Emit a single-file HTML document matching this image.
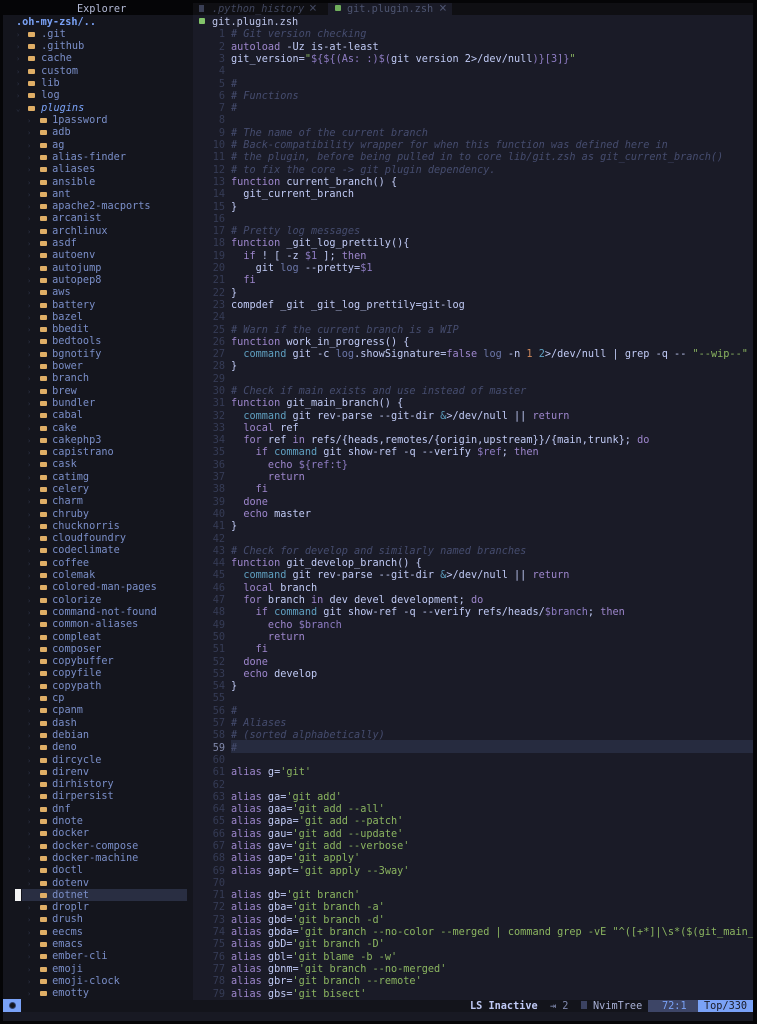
<!DOCTYPE html>
<html><head><meta charset="utf-8"><style>
html,body{margin:0;padding:0;background:#000;width:757px;height:1024px;overflow:hidden}
#r{position:relative;width:757px;height:1024px;overflow:hidden;background:#050507;font-family:"DejaVu Sans Mono","Liberation Mono",monospace;font-size:10.22px;filter:blur(.25px)}
.a{position:absolute}
pre{margin:0;font:inherit;line-height:12.3px}
.c{color:#454c6e;font-style:italic}.k{color:#9d86cc}.b{color:#5f9fc0}.s{color:#8bb560}.v{color:#8e7cc3}.o{color:#d08a5c}.d{color:#6b76a8}
.n{color:#353b55;text-align:right}
.f{display:inline-block;width:7px;height:5px;background:#dfae66;border-radius:1px;vertical-align:baseline;line-height:0}
.t{color:#2e3448;display:inline-block;width:12px;font-size:7px;vertical-align:baseline;line-height:0}
.u .f{position:relative;left:1px}
</style></head><body><div id="r">
<div class="a" style="left:3px;top:15px;width:190px;height:985px;background:#14151d"></div>
<div class="a" style="left:193px;top:3px;width:560px;height:12px;background:#0f0f13"></div>
<div class="a" style="left:193px;top:15px;width:560px;height:985px;background:#1a1b27"></div>
<div class="a" style="left:328px;top:3px;width:124px;height:12px;background:#1a1b27"></div>
<div class="a" style="left:231px;top:740px;width:522px;height:13px;background:#262b3f"></div>
<div class="a" style="left:22px;top:889px;width:165px;height:12px;background:#292e42"></div>
<div class="a" style="left:15px;top:889px;width:6px;height:12px;background:#f4f4f4"></div>
<div class="a" style="left:77px;top:4px;color:#b4bad6">Explorer</div>
<div class="a" style="left:199px;top:5px;width:5px;height:7px;background:#3a3f55"></div>
<div class="a" style="left:212px;top:4px;color:#41475f;font-style:italic">.python_history</div>
<div class="a" style="left:309px;top:2px;color:#41475f;font-size:13px;line-height:13px">×</div>
<div class="a" style="left:335px;top:5px;width:6px;height:6px;background:#6fae5c;border-radius:1px"></div>
<div class="a" style="left:347px;top:4px;color:#4d5470">git.plugin.zsh</div>
<div class="a" style="left:439px;top:2px;color:#4d5470;font-size:13px;line-height:13px">×</div>
<div class="a" style="left:199px;top:18px;width:6px;height:6px;background:#82c46a;border-radius:1px"></div>
<div class="a" style="left:212px;top:16.5px;color:#bdc5ea">git.plugin.zsh</div>
<div class="a" style="left:16px;top:16.5px;color:#7aa2f7;font-weight:bold">.oh-my-zsh/..</div>
<pre class="a" style="left:16px;top:28.8px;color:#7a8ec8"><span class="t">›</span><span class="f"></span> .git
<span class="t">›</span><span class="f"></span> .github
<span class="t">›</span><span class="f"></span> cache
<span class="t">›</span><span class="f"></span> custom
<span class="t">›</span><span class="f"></span> lib
<span class="t">›</span><span class="f"></span> log
<span class="t">⌄</span><span class="f"></span> <b style="font-style:italic;font-weight:500;color:#7aa2f7">plugins</b>
</pre>
<pre class="a u" style="left:27px;top:115.1px;color:#7a8ec8"><span class="t">›</span><span class="f"></span> 1password
<span class="t">›</span><span class="f"></span> adb
<span class="t">›</span><span class="f"></span> ag
<span class="t">›</span><span class="f"></span> alias-finder
<span class="t">›</span><span class="f"></span> aliases
<span class="t">›</span><span class="f"></span> ansible
<span class="t">›</span><span class="f"></span> ant
<span class="t">›</span><span class="f"></span> apache2-macports
<span class="t">›</span><span class="f"></span> arcanist
<span class="t">›</span><span class="f"></span> archlinux
<span class="t">›</span><span class="f"></span> asdf
<span class="t">›</span><span class="f"></span> autoenv
<span class="t">›</span><span class="f"></span> autojump
<span class="t">›</span><span class="f"></span> autopep8
<span class="t">›</span><span class="f"></span> aws
<span class="t">›</span><span class="f"></span> battery
<span class="t">›</span><span class="f"></span> bazel
<span class="t">›</span><span class="f"></span> bbedit
<span class="t">›</span><span class="f"></span> bedtools
<span class="t">›</span><span class="f"></span> bgnotify
<span class="t">›</span><span class="f"></span> bower
<span class="t">›</span><span class="f"></span> branch
<span class="t">›</span><span class="f"></span> brew
<span class="t">›</span><span class="f"></span> bundler
<span class="t">›</span><span class="f"></span> cabal
<span class="t">›</span><span class="f"></span> cake
<span class="t">›</span><span class="f"></span> cakephp3
<span class="t">›</span><span class="f"></span> capistrano
<span class="t">›</span><span class="f"></span> cask
<span class="t">›</span><span class="f"></span> catimg
<span class="t">›</span><span class="f"></span> celery
<span class="t">›</span><span class="f"></span> charm
<span class="t">›</span><span class="f"></span> chruby
<span class="t">›</span><span class="f"></span> chucknorris
<span class="t">›</span><span class="f"></span> cloudfoundry
<span class="t">›</span><span class="f"></span> codeclimate
<span class="t">›</span><span class="f"></span> coffee
<span class="t">›</span><span class="f"></span> colemak
<span class="t">›</span><span class="f"></span> colored-man-pages
<span class="t">›</span><span class="f"></span> colorize
<span class="t">›</span><span class="f"></span> command-not-found
<span class="t">›</span><span class="f"></span> common-aliases
<span class="t">›</span><span class="f"></span> compleat
<span class="t">›</span><span class="f"></span> composer
<span class="t">›</span><span class="f"></span> copybuffer
<span class="t">›</span><span class="f"></span> copyfile
<span class="t">›</span><span class="f"></span> copypath
<span class="t">›</span><span class="f"></span> cp
<span class="t">›</span><span class="f"></span> cpanm
<span class="t">›</span><span class="f"></span> dash
<span class="t">›</span><span class="f"></span> debian
<span class="t">›</span><span class="f"></span> deno
<span class="t">›</span><span class="f"></span> dircycle
<span class="t">›</span><span class="f"></span> direnv
<span class="t">›</span><span class="f"></span> dirhistory
<span class="t">›</span><span class="f"></span> dirpersist
<span class="t">›</span><span class="f"></span> dnf
<span class="t">›</span><span class="f"></span> dnote
<span class="t">›</span><span class="f"></span> docker
<span class="t">›</span><span class="f"></span> docker-compose
<span class="t">›</span><span class="f"></span> docker-machine
<span class="t">›</span><span class="f"></span> doctl
<span class="t">›</span><span class="f"></span> dotenv
<span class="t">›</span><span class="f"></span> dotnet
<span class="t">›</span><span class="f"></span> droplr
<span class="t">›</span><span class="f"></span> drush
<span class="t">›</span><span class="f"></span> eecms
<span class="t">›</span><span class="f"></span> emacs
<span class="t">›</span><span class="f"></span> ember-cli
<span class="t">›</span><span class="f"></span> emoji
<span class="t">›</span><span class="f"></span> emoji-clock
<span class="t">›</span><span class="f"></span> emotty</pre>
<pre class="a n" style="left:200px;top:29.4px;width:25px">1
2
3
4
5
6
7
8
9
10
11
12
13
14
15
16
17
18
19
20
21
22
23
24
25
26
27
28
29
30
31
32
33
34
35
36
37
38
39
40
41
42
43
44
45
46
47
48
49
50
51
52
53
54
55
56
57
58
<span style="color:#8088aa">59</span>
60
61
62
63
64
65
66
67
68
69
70
71
72
73
74
75
76
77
78
79</pre>
<div class="a" style="left:231px;top:15px;width:522px;height:985px;overflow:hidden">
<pre class="a" style="left:0;top:14.4px;color:#c0caf5;white-space:pre"><span class="c"># Git version checking</span>
<span class="k">autoload</span> -Uz is-at-least
git_version=<span class="s">"</span><span class="v">${${(As: :)$(</span>git version 2&gt;/dev/null<span class="v">)}[3]}</span><span class="s">"</span>

<span class="c">#</span>
<span class="c"># Functions</span>
<span class="c">#</span>

<span class="c"># The name of the current branch</span>
<span class="c"># Back-compatibility wrapper for when this function was defined here in</span>
<span class="c"># the plugin, before being pulled in to core lib/git.zsh as git_current_branch()</span>
<span class="c"># to fix the core -&gt; git plugin dependency.</span>
<span class="k">function</span> current_branch() {
  git_current_branch
}

<span class="c"># Pretty log messages</span>
<span class="k">function</span> _git_log_prettily(){
  <span class="k">if</span> ! [ -z <span class="v">$1</span> ]; <span class="k">then</span>
    git <span class="d">log</span> --pretty=<span class="v">$1</span>
  <span class="k">fi</span>
}
compdef _git _git_log_prettily=git-log

<span class="c"># Warn if the current branch is a WIP</span>
<span class="k">function</span> work_in_progress() {
  <span class="b">command</span> git -c <span class="d">log</span>.showSignature=<span class="k">false</span> <span class="d">log</span> -n <span class="o">1</span> <span class="b">2</span>&gt;/dev/null | grep -q -- <span class="s">"--wip--"</span>
}

<span class="c"># Check if main exists and use instead of master</span>
<span class="k">function</span> git_main_branch() {
  <span class="b">command</span> git rev-parse --git-dir <span class="b">&amp;</span>&gt;/dev/null || <span class="k">return</span>
  <span class="k">local</span> ref
  <span class="k">for</span> ref <span class="k">in</span> refs/{heads,remotes/{origin,upstream}}/{main,trunk}; <span class="k">do</span>
    <span class="k">if</span> <span class="b">command</span> git show-ref -q --verify <span class="v">$ref</span>; <span class="k">then</span>
      <span class="k">echo</span> <span class="v">${ref:t}</span>
      <span class="k">return</span>
    <span class="k">fi</span>
  <span class="k">done</span>
  <span class="k">echo</span> master
}

<span class="c"># Check for develop and similarly named branches</span>
<span class="k">function</span> git_develop_branch() {
  <span class="b">command</span> git rev-parse --git-dir <span class="b">&amp;</span>&gt;/dev/null || <span class="k">return</span>
  <span class="k">local</span> branch
  <span class="k">for</span> branch <span class="k">in</span> dev devel development; <span class="k">do</span>
    <span class="k">if</span> <span class="b">command</span> git show-ref -q --verify refs/heads/<span class="v">$branch</span>; <span class="k">then</span>
      <span class="k">echo</span> <span class="v">$branch</span>
      <span class="k">return</span>
    <span class="k">fi</span>
  <span class="k">done</span>
  <span class="k">echo</span> develop
}

<span class="c">#</span>
<span class="c"># Aliases</span>
<span class="c"># (sorted alphabetically)</span>
<span class="c">#</span>

<span class="k">alias</span> g=<span class="s">'git'</span>

<span class="k">alias</span> ga=<span class="s">'git add'</span>
<span class="k">alias</span> gaa=<span class="s">'git add --all'</span>
<span class="k">alias</span> gapa=<span class="s">'git add --patch'</span>
<span class="k">alias</span> gau=<span class="s">'git add --update'</span>
<span class="k">alias</span> gav=<span class="s">'git add --verbose'</span>
<span class="k">alias</span> gap=<span class="s">'git apply'</span>
<span class="k">alias</span> gapt=<span class="s">'git apply --3way'</span>

<span class="k">alias</span> gb=<span class="s">'git branch'</span>
<span class="k">alias</span> gba=<span class="s">'git branch -a'</span>
<span class="k">alias</span> gbd=<span class="s">'git branch -d'</span>
<span class="k">alias</span> gbda=<span class="s">'git branch --no-color --merged | command grep -vE "^([+*]|\s*($(git_main_branch)))"</span>
<span class="k">alias</span> gbD=<span class="s">'git branch -D'</span>
<span class="k">alias</span> gbl=<span class="s">'git blame -b -w'</span>
<span class="k">alias</span> gbnm=<span class="s">'git branch --no-merged'</span>
<span class="k">alias</span> gbr=<span class="s">'git branch --remote'</span>
<span class="k">alias</span> gbs=<span class="s">'git bisect'</span></pre>
</div>
<div class="a" style="left:3px;top:1000px;width:750px;height:12px;background:#13141b"></div>
<div class="a" style="left:3px;top:1012px;width:750px;height:9px;background:#181923"></div>
<div class="a" style="left:3px;top:999px;width:18px;height:13px;background:#7aa2f7"></div>
<div class="a" style="left:9.5px;top:1002.5px;width:5px;height:5px;border-radius:50%;background:#14151d;box-shadow:0 0 0 1px #2f4370"></div>
<div class="a" style="left:470px;top:1001px;color:#c0caf5;font-weight:bold">LS Inactive</div>
<div class="a" style="left:550px;top:1001px;color:#7f88ad">⇥ 2</div>
<div class="a" style="left:581px;top:1001px;width:6px;height:8px;background:#3b4261"></div>
<div class="a" style="left:593px;top:1001px;color:#a9b1d6">NvimTree</div>
<div class="a" style="left:648px;top:1000px;width:50px;height:12px;background:#3d4566"></div>
<div class="a" style="left:662px;top:1001px;color:#7aa2f7">72:1</div>
<div class="a" style="left:698px;top:1000px;width:55px;height:12px;background:#7aa2f7"></div>
<div class="a" style="left:704px;top:1001px;color:#1a1b26">Top/330</div>
</div></body></html>
